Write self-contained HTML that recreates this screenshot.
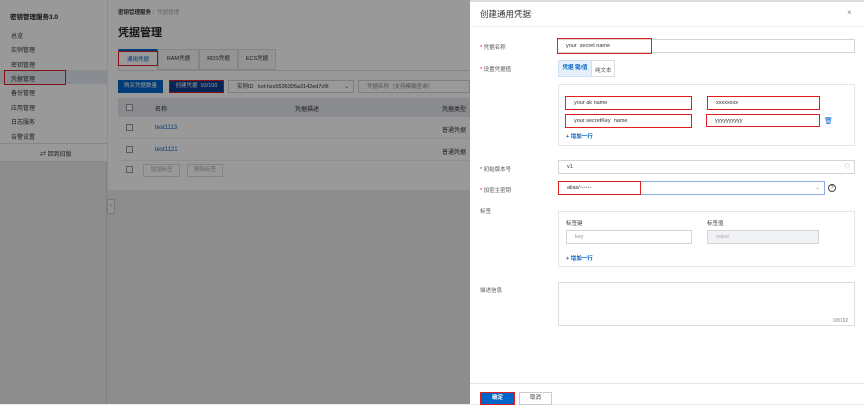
<!DOCTYPE html>
<html><head><meta charset="utf-8"><style>
*{box-sizing:border-box;margin:0;padding:0}
body{width:864px;height:404px;overflow:hidden;position:relative;background:#ebebeb;font-family:"Liberation Sans","Noto Sans CJK SC",sans-serif;font-size:6px;color:#333}
.a{position:absolute}
.side{left:0;top:0;width:107px;height:404px;background:#ebebeb;border-right:1px solid #d6d6d6}
.sidetop{left:0;top:0;width:107px;height:162px;background:#fff;border-bottom:1px solid #e3e3e3}
.mi{left:11px;font-size:6px;color:#333}
.main{left:108px;top:0;width:362px;height:190px;background:#fff}
.btn{font-size:5.5px;text-align:center;line-height:13px}
.cb{width:7px;height:7px;border:1px solid #999;background:#fff}
.ov{left:0;top:0;width:470px;height:404px;background:rgba(0,0,0,0.4)}
.dr{left:470px;top:0;width:394px;height:404px;background:#fff}
.lbl{font-size:5.5px;color:#555}
.lbl b{color:#e00;font-weight:normal}
.inp{border:1px solid #d4d4d4;background:#fff;font-size:5.5px;color:#333;padding-left:8px;line-height:12px}
.red{border:1px solid #e02020}
.link{color:#0064c8;font-size:5.5px;font-weight:bold}
</style></head><body>
<div class="a side"></div>
<div class="a sidetop"></div>
<div class="a" style="left:10px;top:11px;font-size:6.5px;font-weight:bold;color:#222">密钥管理服务3.0</div>
<div class="a mi" style="top:31px">总览</div>
<div class="a mi" style="top:45px">实例管理</div>
<div class="a mi" style="top:60px">密钥管理</div>
<div class="a" style="left:0;top:70px;width:107px;height:14px;background:#e4e9f2"></div>
<div class="a mi" style="top:74px">凭据管理</div>
<div class="a red" style="left:4px;top:70px;width:62px;height:15px"></div>
<div class="a mi" style="top:88px">备份管理</div>
<div class="a mi" style="top:103px">应用管理</div>
<div class="a mi" style="top:117px">日志服务</div>
<div class="a mi" style="top:132px">告警设置</div>
<div class="a" style="left:0;top:143px;width:107px;border-top:1px solid #e3e3e3"></div>
<div class="a" style="left:40px;top:149px;font-size:6px">⇄ 回到旧版</div>
<div class="a" style="left:107px;top:199px;width:8px;height:15px;background:#f5f5f5;border:1px solid #ccc;font-size:6px;text-align:center;line-height:13px;color:#888">‹</div>

<div class="a main"></div>
<div class="a" style="left:118px;top:8px;font-size:5.5px;color:#333"><b>密钥管理服务</b> <span style="color:#aaa">/ &nbsp;凭据管理</span></div>
<div class="a" style="left:118px;top:24px;font-size:11px;font-weight:bold;color:#222">凭据管理</div>
<div class="a" style="left:118px;top:70px;width:352px;border-top:1px solid #ddd"></div>
<div class="a btn" style="left:118px;top:49px;width:40px;height:21px;border:1px solid #ddd;border-top:2px solid #0064c8;border-bottom:none;background:#fff;color:#0064c8;line-height:19px">通用凭据</div>
<div class="a btn" style="left:158px;top:49px;width:41px;height:21px;border:1px solid #ddd;background:#f7f7f7;line-height:19px">RAM凭据</div>
<div class="a btn" style="left:199px;top:49px;width:39px;height:21px;border:1px solid #ddd;background:#f7f7f7;line-height:19px">RDS凭据</div>
<div class="a btn" style="left:238px;top:49px;width:38px;height:21px;border:1px solid #ddd;background:#f7f7f7;line-height:19px">ECS凭据</div>
<div class="a red" style="left:118px;top:51px;width:40px;height:15px"></div>
<div class="a btn" style="left:118px;top:80px;width:45px;height:13px;background:#0064c8;color:#fff">购买凭据数量</div>
<div class="a btn" style="left:169px;top:80px;width:55px;height:13px;background:#0a3d8f;color:#fff;border:1px solid #e02020;line-height:11px">创建凭据 &nbsp;93/100</div>
<div class="a inp" style="left:228px;top:80px;width:126px;height:13px">实例ID &nbsp; kst-hzz6536305a3142ed7v9l<span style="position:absolute;right:4px">⌄</span></div>
<div class="a inp" style="left:358px;top:80px;width:112px;height:13px;color:#888">凭据名称（支持模糊查询）</div>
<div class="a" style="left:118px;top:98px;width:352px;height:19px;background:#e4e8ee"></div>
<div class="a cb" style="left:126px;top:104px"></div>
<div class="a" style="left:155px;top:104px">名称</div>
<div class="a" style="left:295px;top:104px">凭据描述</div>
<div class="a" style="left:442px;top:104px">凭据类型</div>
<div class="a" style="left:118px;top:138px;width:352px;border-top:1px solid #eee"></div>
<div class="a" style="left:118px;top:160px;width:352px;border-top:1px solid #eee"></div>
<div class="a cb" style="left:126px;top:124px"></div>
<div class="a" style="left:155px;top:125px;color:#0064c8">test1113</div>
<div class="a" style="left:442px;top:125px">普通凭据</div>
<div class="a cb" style="left:126px;top:146px"></div>
<div class="a" style="left:155px;top:147px;color:#0064c8">test1121</div>
<div class="a" style="left:442px;top:147px">普通凭据</div>
<div class="a cb" style="left:126px;top:166px"></div>
<div class="a btn" style="left:143px;top:164px;width:37px;height:13px;border:1px solid #ddd;color:#aaa;line-height:11px">增加标签</div>
<div class="a btn" style="left:187px;top:164px;width:36px;height:13px;border:1px solid #ddd;color:#aaa;line-height:11px">删除标签</div>
<div class="a ov"></div>

<div class="a dr"></div>
<div class="a" style="left:470px;top:0;width:394px;height:2px;background:#ddd"></div>
<div class="a" style="left:480px;top:8px;font-size:8.5px;color:#333">创建通用凭据</div>
<div class="a" style="left:847px;top:8px;font-size:8px;color:#888">×</div>
<div class="a" style="left:470px;top:26px;width:394px;border-top:1px solid #eee"></div>

<div class="a lbl" style="left:480px;top:43px"><b>*</b> 凭据名称</div>
<div class="a inp" style="left:557px;top:39px;width:298px;height:14px">your &nbsp;secret name</div>
<div class="a red" style="left:557px;top:38px;width:95px;height:16px"></div>

<div class="a lbl" style="left:480px;top:65px"><b>*</b> 设置凭据值</div>
<div class="a" style="left:558px;top:60px;width:57px;height:17px;border:1px solid #ddd"></div>
<div class="a" style="left:558px;top:60px;width:34px;height:17px;background:#e6f0fb;border:1px solid #cfe0f5;font-size:5.5px;color:#0064c8;font-weight:bold;text-align:center;line-height:15px">凭据 键/值</div>
<div class="a" style="left:595px;top:66px;font-size:5.5px;color:#555">纯文本</div>

<div class="a" style="left:558px;top:84px;width:297px;height:62px;border:1px solid #e6e6e6"></div>
<div class="a inp red" style="left:565px;top:96px;width:127px;height:14px">your ak name</div>
<div class="a inp red" style="left:707px;top:96px;width:113px;height:14px">xxxxxxxx</div>
<div class="a inp red" style="left:565px;top:114px;width:127px;height:14px">your secretKey &nbsp;name</div>
<div class="a inp red" style="left:706px;top:114px;width:114px;height:13px">yyyyyyyyyy</div>
<div class="a" style="left:824px;top:117px;font-size:7px;color:#0064c8">🗑</div>
<div class="a link" style="left:566px;top:132px">+ 增加一行</div>

<div class="a lbl" style="left:480px;top:165px"><b>*</b> 初始版本号</div>
<div class="a inp" style="left:558px;top:160px;width:297px;height:14px">v1<span style="position:absolute;right:4px;color:#888">◇</span></div>

<div class="a lbl" style="left:480px;top:186px"><b>*</b> 加密主密钥</div>
<div class="a inp" style="left:558px;top:181px;width:267px;height:14px;border-color:#88aee0">alias/<span style="color:#aaa">••••••</span><span style="position:absolute;right:4px;color:#888">⌄</span></div>
<div class="a red" style="left:558px;top:181px;width:83px;height:14px"></div>
<div class="a" style="left:828px;top:184px;width:8px;height:8px;border:1px solid #444;border-radius:50%;font-size:5.5px;text-align:center;line-height:6px">?</div>

<div class="a lbl" style="left:480px;top:207px">标签</div>
<div class="a" style="left:558px;top:211px;width:297px;height:56px;border:1px solid #e6e6e6"></div>
<div class="a lbl" style="left:566px;top:219px;color:#444">标签键</div>
<div class="a lbl" style="left:707px;top:219px;color:#444">标签值</div>
<div class="a inp" style="left:566px;top:230px;width:126px;height:14px;color:#999">key</div>
<div class="a inp" style="left:707px;top:230px;width:112px;height:14px;background:#f0f2f5;color:#aaa">value</div>
<div class="a link" style="left:566px;top:254px">+ 增加一行</div>

<div class="a lbl" style="left:480px;top:286px">描述信息</div>
<div class="a" style="left:558px;top:282px;width:297px;height:44px;border:1px solid #ddd"></div>
<div class="a" style="left:833px;top:318px;font-size:5px;color:#888">0/8192</div>

<div class="a" style="left:470px;top:383px;width:394px;border-top:1px solid #e6e6e6"></div>
<div class="a btn" style="left:480px;top:392px;width:35px;height:13px;background:#0064c8;color:#fff;border:1px solid #e02020;font-weight:bold;line-height:11px">确定</div>
<div class="a btn" style="left:519px;top:392px;width:33px;height:13px;border:1px solid #ccc;line-height:11px">取消</div>
</body></html>
